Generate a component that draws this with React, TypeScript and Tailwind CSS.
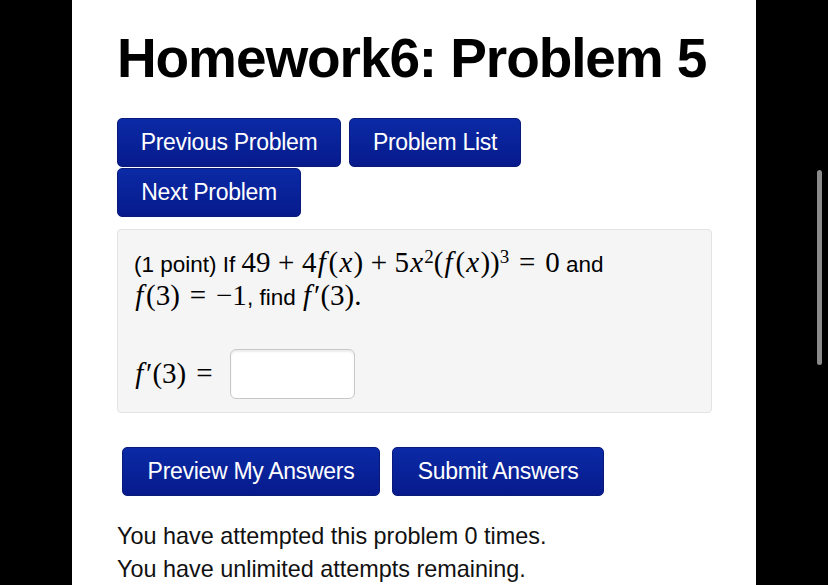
import React from "react";

const sans = { fontFamily: '"Liberation Sans", Arial, sans-serif' };
const serif = { fontFamily: '"Liberation Serif", "Times New Roman", serif' };

function NavButton({ children, className = "" }: { children: React.ReactNode; className?: string }) {
  return (
    <button
      type="button"
      className={`h-[49px] rounded-[5px] border border-[#0a1a7a] bg-gradient-to-b from-[#0b2aa6] to-[#071a8c] text-[23px] tracking-[-0.3px] text-white ${className}`}
      style={sans}
    >
      {children}
    </button>
  );
}

// italic math variables, widened a little to match TeX metrics
function F() {
  return <i className="ml-[0.04em] mr-[0.1em] italic">f</i>;
}
function X() {
  return <i className="mx-[0.04em] italic">x</i>;
}

// binary operator / relation with math spacing
function Op({ children, rel = false }: { children: React.ReactNode; rel?: boolean }) {
  return <span className={rel ? "mx-[0.34em]" : "mx-[0.26em]"}>{children}</span>;
}

export default function App() {
  return (
    <div className="relative h-[585px] w-[828px] overflow-hidden bg-black" style={sans}>
      <div className="ml-[72px] h-full w-[684px] bg-white pl-[45px] pt-[26px]">
        <h1 className="text-[55px] font-bold leading-[64px] tracking-[-1.1px] text-black">Homework6: Problem 5</h1>

        <div className="mt-[28px] flex w-[420px] flex-wrap gap-x-[8px] gap-y-px">
          <NavButton className="w-[224px]">Previous Problem</NavButton>
          <NavButton className="w-[172px]">Problem List</NavButton>
          <NavButton className="w-[184px]">Next Problem</NavButton>
        </div>

        <div className="mt-[12px] h-[184px] w-[595px] rounded-[4px] border border-[#e3e3e3] bg-[#f5f5f5] px-[16px] pt-[17px]">
          <p className="text-[22.5px] leading-[31px] text-black">
            (1 point) If{" "}
            <span className="text-[29px] leading-[31px]" style={serif}>
              49<Op>+</Op>4<F />(<X />)<Op>+</Op>5<X />
              <sup className="text-[19px]">2</sup>(<F />(<X />))<sup className="text-[19px]">3</sup>
              <Op rel>=</Op>0
            </span>{" "}
            and
            <br />
            <span className="text-[29px] leading-[31px]" style={serif}>
              <F />(3)<Op rel>=</Op>−1
            </span>
            , find{" "}
            <span className="text-[29px] leading-[31px]" style={serif}>
              <F />
              <span>′</span>(3).
            </span>
          </p>
          <div className="mt-[36px] flex items-center">
            <span className="mr-[8px] text-[29px] text-black" style={serif}>
              <F />
              <span>′</span>(3)<Op rel>=</Op>
            </span>
            <div className="h-[50px] w-[125px] rounded-[6px] border border-[#c8c8c8] bg-white shadow-[inset_0_2px_2px_rgba(0,0,0,0.08)]" />
          </div>
        </div>

        <div className="ml-[5px] mt-[34px] flex gap-[12px]">
          <NavButton className="w-[258px]">Preview My Answers</NavButton>
          <NavButton className="w-[212px]">Submit Answers</NavButton>
        </div>

        <div className="mt-[24px] text-[23.4px] leading-[33px] text-[#111]">
          <p>You have attempted this problem 0 times.</p>
          <p>You have unlimited attempts remaining.</p>
        </div>
      </div>

      <div className="absolute left-[817px] top-[170px] h-[195px] w-[5px] rounded-full bg-[#8a8a8a]" />
    </div>
  );
}
